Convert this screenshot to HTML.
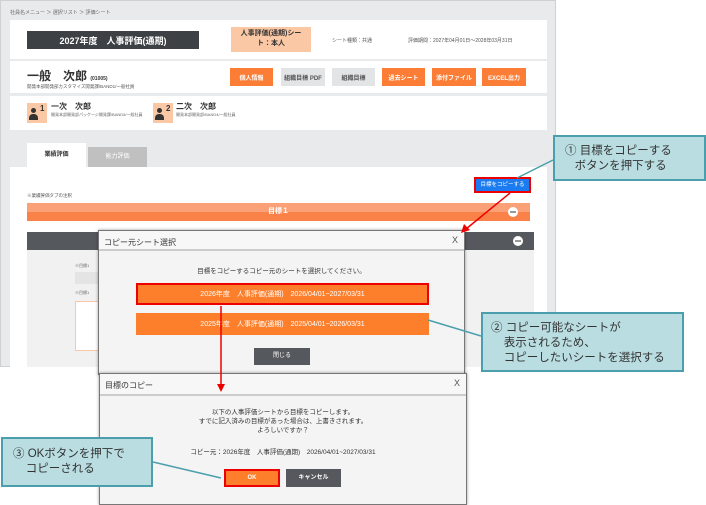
<!DOCTYPE html>
<html><head><meta charset="utf-8"><style>
*{margin:0;padding:0;box-sizing:border-box}
body{width:706px;height:503px;position:relative;overflow:hidden;background:#fff;font-family:"Liberation Sans","Noto Sans CJK JP",sans-serif;color:#333}
.a{position:absolute}
.page{left:0;top:0;width:556px;height:367px;background:#e9eaec;border:1px solid #d0d0d0}
.card{background:#fff}
.btn{position:absolute;height:18px;font-size:6px;font-weight:bold;color:#fff;background:#fb7d36;display:flex;align-items:center;justify-content:center}
.gb{background:#e3e4e6;color:#555}
.call{position:absolute;background:#b9dde1;border:2px solid #4b9fac;color:#333;font-size:11.5px;line-height:15px;white-space:nowrap}
.dlg{position:absolute;background:#f4f4f4;border:1px solid #777;box-shadow:0 0 3px rgba(0,0,0,.4)}
.hd{height:20px;border-bottom:2px solid #ccc;background:#f7f7f7;font-size:8px;padding:6px 5px;position:relative}
.x{position:absolute;right:6px;top:4px;font-size:9px;color:#555}
.opt{position:absolute;left:37px;width:293px;height:22px;background:#fd7f2c;color:#fff;font-size:7px;display:flex;align-items:center;justify-content:center}
.min{position:absolute;width:10px;height:10px;border-radius:50%;background:#fff}
.min:after{content:"";position:absolute;left:2px;top:4px;width:6px;height:2px;background:#999}
.av{position:absolute;width:20px;height:20px;background:#fbc8a5}
.av i{position:absolute;left:4px;top:5px;width:5px;height:5px;border-radius:50%;background:#333}
.av b{position:absolute;left:2px;top:11px;width:9px;height:6px;border-radius:4px 4px 0 0;background:#333}
.av s{position:absolute;left:13px;top:1px;font-size:8px;font-weight:bold;text-decoration:none;color:#333}
</style></head><body>
<div class="a page"></div>
<div class="a" style="left:10px;top:9px;font-size:5px;color:#666">社員名メニュー ＞ 選択リスト ＞ 評価シート</div>
<div class="a card" style="left:10px;top:20px;width:537px;height:39px"></div>
<div class="a" style="left:27px;top:31px;width:172px;height:18px;background:#3d4044;color:#fff;font-size:9px;font-weight:bold;display:flex;align-items:center;justify-content:center">2027年度　人事評価(通期)</div>
<div class="a" style="left:231px;top:27px;width:80px;height:25px;background:#fbc8a5;font-size:7px;font-weight:bold;text-align:center;line-height:10px;padding-top:2px">人事評価(通期)シー<br>ト：本人</div>
<div class="a" style="left:332px;top:37px;font-size:5px;color:#555">シート種類：共通</div>
<div class="a" style="left:408px;top:37px;font-size:5px;color:#555">評価期間：2027年04月01日～2028年03月31日</div>
<div class="a card" style="left:10px;top:61px;width:537px;height:32px"></div>
<div class="a" style="left:27px;top:69px;font-size:12px;font-weight:bold;line-height:14px">一般　次郎 <span style="font-size:5px">(01005)</span></div>
<div class="a" style="left:27px;top:84px;font-size:4.5px;color:#555">開発本部開発部カスタマイズ開発課/BAND1/一般社員</div>
<div class="btn" style="left:230px;top:68px;width:43px">個人情報</div>
<div class="btn gb" style="left:281px;top:68px;width:44px">組織目標 PDF</div>
<div class="btn gb" style="left:332px;top:68px;width:43px">組織目標</div>
<div class="btn" style="left:382px;top:68px;width:43px">過去シート</div>
<div class="btn" style="left:432px;top:68px;width:44px">添付ファイル</div>
<div class="btn" style="left:482px;top:68px;width:44px">EXCEL出力</div>
<div class="a card" style="left:10px;top:96px;width:537px;height:34px"></div>
<div class="av" style="left:27px;top:103px"><i></i><b></b><s>1</s></div>
<div class="a" style="left:51px;top:101px;font-size:8px;font-weight:bold">一次　次郎</div>
<div class="a" style="left:51px;top:112px;font-size:4px;color:#666;width:95px">開発本部開発部パッケージ開発課/BAND5/一般社員</div>
<div class="av" style="left:153px;top:103px"><i></i><b></b><s>2</s></div>
<div class="a" style="left:176px;top:101px;font-size:8px;font-weight:bold">二次　次郎</div>
<div class="a" style="left:176px;top:112px;font-size:4px;color:#666">開発本部開発部/BAND4/一般社員</div>
<div class="a card" style="left:27px;top:143px;width:59px;height:24px;font-size:6px;font-weight:bold;text-align:center;line-height:24px">業績評価</div>
<div class="a" style="left:88px;top:147px;width:59px;height:20px;background:#c0c0c0;color:#fff;font-size:6px;text-align:center;line-height:20px">能力評価</div>
<div class="a card" style="left:10px;top:167px;width:537px;height:200px"></div>
<div class="a" style="left:474px;top:177px;width:57px;height:16px;background:#1a7cf0;border:2px solid #e00;color:#fff;font-size:5.5px;text-align:center;line-height:12px">目標をコピーする</div>
<div class="a" style="left:27px;top:193px;font-size:4.5px;color:#555">※業績評価タブの注釈</div>
<div class="a" style="left:27px;top:203px;width:503px;height:18px;background:linear-gradient(#fba177 50%,#fa8147 50%);color:#fff;font-size:7px;font-weight:bold;text-align:center;line-height:18px">目標１</div>
<div class="min" style="left:508px;top:207px"></div>
<div class="a" style="left:27px;top:232px;width:507px;height:18px;background:#55585c"></div>
<div class="min" style="left:513px;top:236px"></div>
<div class="a" style="left:27px;top:250px;width:507px;height:117px;background:#f1f1f1"></div>
<div class="a" style="left:75px;top:263px;font-size:4px;color:#666">※目標1</div>
<div class="a" style="left:75px;top:272px;width:25px;height:12px;background:#e4e4e4"></div>
<div class="a" style="left:75px;top:290px;font-size:4px;color:#666">※目標1</div>
<div class="a" style="left:75px;top:301px;width:25px;height:50px;background:#fff;border:1px solid #fbc8a5"></div>

<div class="dlg" style="left:98px;top:230px;width:367px;height:145px">
<div class="hd">コピー元シート選択<span class="x">X</span></div>
<div class="a" style="left:0;top:34px;width:100%;text-align:center;font-size:6.5px">目標をコピーするコピー元のシートを選択してください。</div>
<div class="opt" style="top:52px;border:2px solid #e00">2026年度　人事評価(通期)　2026/04/01~2027/03/31</div>
<div class="opt" style="top:82px">2025年度　人事評価(通期)　2025/04/01~2026/03/31</div>
<div class="a" style="left:155px;top:117px;width:56px;height:17px;background:#55585c;color:#fff;font-size:6px;text-align:center;line-height:17px">閉じる</div>
</div>
<div class="dlg" style="left:99px;top:373px;width:368px;height:132px">
<div class="hd" style="height:22px">目標のコピー<span class="x">X</span></div>
<div class="a" style="left:0;top:34px;width:100%;text-align:center;font-size:6.5px;line-height:9px">以下の人事評価シートから目標をコピーします。<br>すでに記入済みの目標があった場合は、上書きされます。<br>よろしいですか？</div>
<div class="a" style="left:0;top:72px;width:100%;text-align:center;font-size:6.5px">コピー元：2026年度　人事評価(通期)　2026/04/01~2027/03/31</div>
<div class="a" style="left:124px;top:95px;width:56px;height:18px;background:#fd7f2c;border:2px solid #e00;color:#fff;font-size:6px;font-weight:bold;text-align:center;line-height:14px">OK</div>
<div class="a" style="left:186px;top:95px;width:55px;height:18px;background:#55585c;color:#fff;font-size:6px;font-weight:bold;text-align:center;line-height:18px">キャンセル</div>
</div>

<svg class="a" style="left:0;top:0" width="706" height="503">
<line x1="553" y1="160" x2="517" y2="178" stroke="#4b9fac" stroke-width="1.5"/>
<line x1="428" y1="320" x2="481" y2="336" stroke="#4b9fac" stroke-width="1.5"/>
<line x1="153" y1="462" x2="221" y2="478" stroke="#4b9fac" stroke-width="1.5"/>
<line x1="510" y1="193" x2="466" y2="229" stroke="#e00" stroke-width="1.5"/>
<polygon points="461,233 464,224 470,230" fill="#e00"/>
<line x1="221" y1="306" x2="221" y2="385" stroke="#e00" stroke-width="1.5"/>
<polygon points="217,384 225,384 221,392" fill="#e00"/>
</svg>
<div class="call" style="left:553px;top:135px;width:153px;height:46px;padding:7px 10px">① 目標をコピーする<br>&nbsp;&nbsp;&nbsp;ボタンを押下する</div>
<div class="call" style="left:481px;top:312px;width:203px;height:60px;padding:7px 8px">② コピー可能なシートが<br>&nbsp;&nbsp;&nbsp;&nbsp;表示されるため、<br>&nbsp;&nbsp;&nbsp;&nbsp;コピーしたいシートを選択する</div>
<div class="call" style="left:1px;top:437px;width:152px;height:50px;padding:8px 10px">③ OKボタンを押下で<br>&nbsp;&nbsp;&nbsp;&nbsp;コピーされる</div>
</body></html>
